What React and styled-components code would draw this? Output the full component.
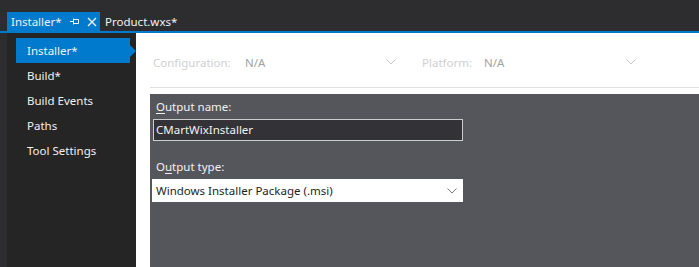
import React from 'react'
import styled, { createGlobalStyle } from 'styled-components'

const GlobalStyle = createGlobalStyle`
  html, body { margin: 0; padding: 0; background: #2d2d30; }
  body { font-family: "Noto Sans", "Open Sans", sans-serif; font-size: 11.5px; }
`;

const Window = styled.div`
  width: 699px;
  height: 267px;
  display: flex;
  flex-direction: column;
  background: #2d2d30;
  overflow: hidden;
`;

const TabBar = styled.div`
  display: flex;
  align-items: flex-end;
  height: 31px;
  padding-left: 7px;
  border-bottom: 2px solid #007acc;
  box-sizing: content-box;
`;

const Tab = styled.div`
  display: flex;
  align-items: center;
  height: 19px;
  padding: 0 6px 0 ${p => (p.active ? 4 : 5)}px;
  gap: 8px;
  color: #f1f1f1;
  background: ${p => (p.active ? '#007acc' : 'transparent')};
  width: ${p => (p.active ? '83px' : 'auto')};
`;

const TabLabel = styled.span`
  flex: 1;
  white-space: nowrap;
  line-height: 19px;
`;

const TabIcon = styled.svg`
  display: block;
  flex: none;
`;

const Body = styled.div`
  flex: 1;
  display: flex;
  padding-left: 7px;
  min-height: 0;
`;

const Nav = styled.div`
  width: 129px;
  background: #252526;
  padding-top: 5px;
  box-sizing: border-box;
  display: flex;
  flex-direction: column;
`;

const NavItem = styled.div`
  position: relative;
  height: 25px;
  margin-left: 9px;
  width: 114px;
  padding-left: 11px;
  box-sizing: border-box;
  line-height: 25px;
  color: #f1f1f1;
  white-space: nowrap;
  background: ${p => (p.active ? '#007acc' : 'transparent')};

  ${p => p.active && `
    &::after {
      content: '';
      position: absolute;
      right: -6px;
      top: 7px;
      border-left: 6px solid #007acc;
      border-top: 6px solid transparent;
      border-bottom: 6px solid transparent;
    }
  `}
`;

const Content = styled.div`
  flex: 1;
  background: #ffffff;
  display: flex;
  flex-direction: column;
  padding-left: 14px;
`;

const ConfigRow = styled.div`
  height: 55px;
  display: flex;
  align-items: center;
  padding-left: 3px;
  border-bottom: 1px solid #e0e0e0;
  box-sizing: border-box;
  padding-top: 4px;
`;

const ConfigGroup = styled.div`
  display: flex;
  align-items: center;
  width: ${p => p.width}px;
  margin-left: ${p => p.offset || 0}px;
`;

const ConfigLabel = styled.span`
  color: #cfcfcf;
  width: ${p => p.width}px;
`;

const ConfigValue = styled.span`
  color: #a2a2a2;
  flex: 1;
`;

const Chevron = ({ color = '#c8c8c8' }) => (
  <svg width="10" height="6" viewBox="0 0 10 6" style={{ display: 'block', flex: 'none' }}>
    <path d="M0.5 0.5 L5 5 L9.5 0.5" fill="none" stroke={color} strokeWidth="1" />
  </svg>
);

const Panel = styled.div`
  flex: 1;
  margin-top: 6px;
  background: #55565b;
  padding: 2px 0 0 3px;
  display: flex;
  flex-direction: column;
`;

const FieldLabel = styled.div`
  color: #f1f1f1;
  height: 22px;
  line-height: 22px;
  padding-left: 3px;
  margin-bottom: 1px;

  & u { text-decoration: underline; text-underline-offset: 2px; }
`;

const TextBox = styled.div`
  width: 310px;
  height: 22px;
  box-sizing: border-box;
  border: 1px solid #cccccc;
  background: #333337;
  color: #f1f1f1;
  padding-left: 2px;
  line-height: 20px;
  margin-bottom: 15px;
`;

const Select = styled.div`
  width: 311px;
  height: 23px;
  margin-left: -1px;
  box-sizing: border-box;
  background: #ffffff;
  color: #1e1e1e;
  display: flex;
  align-items: center;
  justify-content: space-between;
  padding: 0 6px 0 4px;
`;

export default function App() {
  return (
    <>
      <GlobalStyle />
      <Window>
        <TabBar>
          <Tab active>
            <TabLabel>Installer*</TabLabel>
            <TabIcon width="9" height="9" viewBox="0 0 9 9">
              <path d="M0 4.5 H3 M3.5 1.5 V7.5 M4 2.5 H8.5 V6.5 H4" fill="none" stroke="#f1f1f1" strokeWidth="1" />
            </TabIcon>
            <TabIcon width="10" height="10" viewBox="0 0 10 10">
              <path d="M1 1 L9 9 M9 1 L1 9" fill="none" stroke="#f1f1f1" strokeWidth="1.4" />
            </TabIcon>
          </Tab>
          <Tab>
            <TabLabel>Product.wxs*</TabLabel>
          </Tab>
        </TabBar>
        <Body>
          <Nav>
            <NavItem active>Installer*</NavItem>
            <NavItem>Build*</NavItem>
            <NavItem>Build Events</NavItem>
            <NavItem>Paths</NavItem>
            <NavItem>Tool Settings</NavItem>
          </Nav>
          <Content>
            <ConfigRow>
              <ConfigGroup width={243}>
                <ConfigLabel width={92}>Configuration:</ConfigLabel>
                <ConfigValue>N/A</ConfigValue>
                <Chevron />
              </ConfigGroup>
              <ConfigGroup width={214} offset={26}>
                <ConfigLabel width={62}>Platform:</ConfigLabel>
                <ConfigValue>N/A</ConfigValue>
                <Chevron />
              </ConfigGroup>
            </ConfigRow>
            <Panel>
              <FieldLabel><u>O</u>utput name:</FieldLabel>
              <TextBox>CMartWixInstaller</TextBox>
              <FieldLabel>O<u>u</u>tput type:</FieldLabel>
              <Select>
                <span>Windows Installer Package (.msi)</span>
                <Chevron color="#777777" />
              </Select>
            </Panel>
          </Content>
        </Body>
      </Window>
    </>
  )
}
